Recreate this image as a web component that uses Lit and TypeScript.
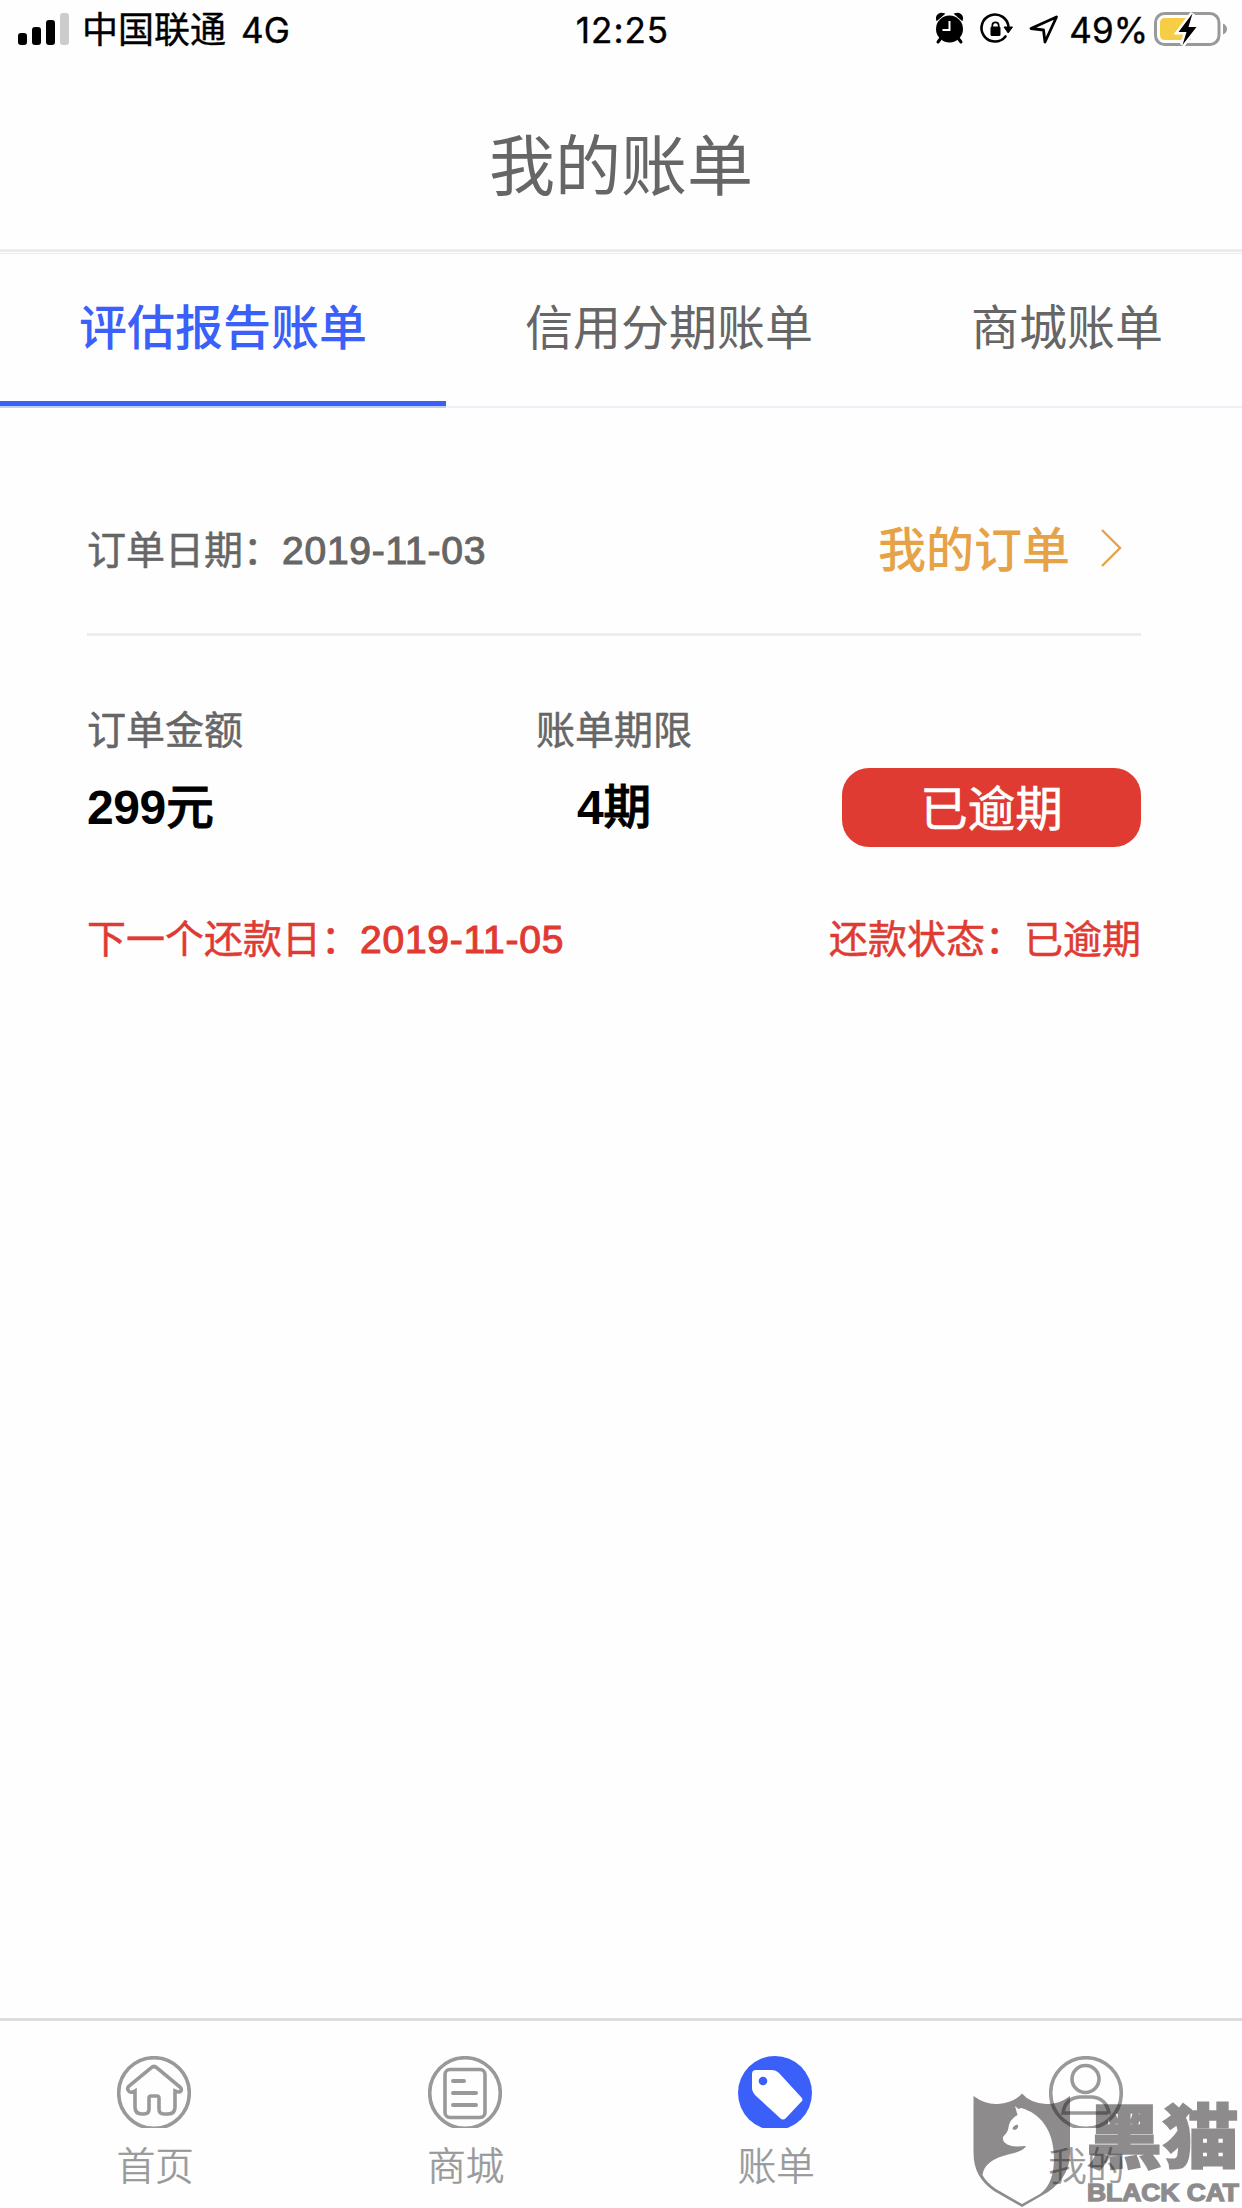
import {css, html, LitElement, svg} from "lit";
import {customElement, property} from "lit/decorators.js";

@customElement("status-bar")
export class StatusBar extends LitElement {
  static override styles = css`
    :host {
      display: flex;
      justify-content: space-between;
      align-items: center;
      height: 60px;
      padding: 0 15px 0 18px;
      box-sizing: border-box;
      color: #000;
      font-family: Inter, "Noto Sans CJK SC", sans-serif;
      font-size: 35px;
      line-height: 59px;
      -webkit-text-stroke: 0.4px;
    }
    .side {
      display: flex;
      flex: 1;
      align-items: center;
    }
    .right {
      justify-content: flex-end;
    }
    .carrier {
      margin-left: 12px;
      font-size: 36px;
      line-height: 60px;
    }
    .network {
      margin-left: 15px;
    }
    .time {
      letter-spacing: 1px;
    }
    .percent {
      margin: 0 5px 0 10px;
    }
    svg {
      display: block;
    }
  `;

  override render() {
    return html`
      <div class="side">
        <svg width="52" height="60">
          <rect x="0" y="33" width="9" height="12" rx="3" />
          <rect x="14" y="27" width="9" height="18" rx="3" />
          <rect x="28" y="20" width="9" height="25" rx="3" />
          <rect x="42" y="13" width="9" height="32" rx="3" fill="#ccc" />
        </svg>
        <span class="carrier">中国联通</span>
        <span class="network">4G</span>
      </div>
      <span class="time">12:25</span>
      <div class="side right">
        <svg width="124" height="60" viewBox="934 0 124 60">
          <circle cx="948.500" cy="29" r="13.500" />
          <path d="M936 20a5 5 0 0 1 7-6zM961 20a5 5 0 0 0-7-6z" stroke="#000" stroke-width="1.500" />
          <path d="M940 38l-3 4M957 38l3 4" stroke="#000" stroke-width="3" stroke-linecap="round" />
          <path d="M948.500 21v9h-7" fill="none" stroke="#fff" stroke-width="2" />
          <path d="M1004.500 36.500a13.500 13.500 0 1 1 3-9" fill="none" stroke="#000" stroke-width="2.600" stroke-linecap="round" />
          <path d="M1003 27h8.500l-4.300 6z" stroke="#000" stroke-linejoin="round" />
          <rect x="989.500" y="26.500" width="10" height="9.500" rx="1.500" />
          <path d="M991.300 28v-2.500a3.200 3.200 0 0 1 6.400 0v2.500" fill="none" stroke="#000" stroke-width="1.700" />
          <path d="M1030 28.500l25.500-11.500-11.500 25-1.500-12z" fill="none" stroke="#000" stroke-width="2.800" stroke-linejoin="round" />
        </svg>
        <span class="percent">49%</span>
        <svg width="74" height="60" viewBox="1153 0 74 60">
          <rect x="1155.500" y="13.500" width="63.500" height="31" rx="9" fill="none" stroke="#999" stroke-width="3" />
          <path d="M1223 23.500q4 2 4 5.500t-4 5.500z" fill="#999" />
          <path d="M1160 23q0-5 5-5h26v22h-26q-5 0-5-5z" fill="#f7cd46" />
          <path d="M1192.500 13.500l-14 18.500h8l-4 13 14-18h-8z" stroke="#fff" stroke-width="5" />
          <path d="M1192.500 13.500l-14 18.500h8l-4 13 14-18h-8z" />
        </svg>
      </div>
    `;
  }
}

@customElement("bill-tabs")
export class BillTabs extends LitElement {
  static override styles = css`
    :host {
      display: flex;
      height: 154px;
      box-sizing: border-box;
      border-bottom: 2px solid #efeff7;
    }
    .tab {
      height: 152px;
      padding: 0 79px;
      box-sizing: border-box;
      font-size: 48px;
      line-height: 150px;
      white-space: nowrap;
    }
    .tab.active {
      height: 154px;
      border-bottom: 2px solid #c0cff2;
      box-shadow: inset 0 -5px #3b60f9;
      color: #3b60f9;
      font-weight: 500;
    }
  `;

  @property({ type: Array }) tabs: string[] = [];
  @property({ type: Number }) active = 0;

  override render() {
    return this.tabs.map(
      (tab, i) => html`<div class="tab ${i === this.active ? "active" : ""}" role="tab">${tab}</div>`
    );
  }
}

@customElement("bill-card")
export class BillCard extends LitElement {
  static override styles = css`
    :host {
      display: block;
      padding: 56px 101px 0 87px;
      font-size: 39px;
    }
    .row {
      display: flex;
      justify-content: space-between;
      align-items: center;
    }
    .head {
      height: 169px;
      border-bottom: 3px solid #eee;
    }
    .text {
      -webkit-text-stroke: 0.5px;
    }
    .head .text {
      padding-bottom: 3px;
    }
    .date {
      letter-spacing: 0.75px;
      -webkit-text-stroke: 1.1px;
    }
    .orders {
      display: flex;
      align-items: center;
      padding-right: 18px;
      color: #e6a246;
      font-size: 48px;
      font-weight: 500;
    }
    .orders span {
      padding-bottom: 5px;
    }
    .orders svg {
      margin: 0 0 2px 29px;
    }
    .amounts {
      display: grid;
      grid-template-columns: 449px 156px 1fr;
      align-items: end;
      padding-top: 63px;
    }
    .label {
      height: 60px;
      line-height: 64px;
    }
    .value {
      height: 72px;
      margin-top: 12px;
      line-height: 73px;
      color: #000;
      font-size: 48px;
      font-weight: bold;
      letter-spacing: -0.4px;
    }
    .term {
      text-align: center;
    }
    .unit {
      font-weight: 500;
      -webkit-text-stroke: 0.8px;
    }
    .badge {
      justify-self: end;
      width: 299px;
      height: 79px;
      margin-bottom: -4px;
      border-radius: 27px;
      background: #df3b32;
      color: #fff;
      font-size: 47.500px;
      line-height: 83px;
      text-align: center;
      -webkit-text-stroke: 0.6px;
    }
    .repay {
      height: 60px;
      padding-top: 63px;
      color: #df3b32;
    }
  `;

  override render() {
    return html`
      <div class="row head">
        <div class="text">订单日期：<span class="date">2019-11-03</span></div>
        <div class="orders">
          <span>我的订单</span>
          <svg width="24" height="42" viewBox="0 0 24 42">
            <path d="M3 3l18 18-18 18" fill="none" stroke="#e6a246" stroke-width="2.400" />
          </svg>
        </div>
      </div>
      <div class="amounts">
        <div>
          <div class="label text">订单金额</div>
          <div class="value">299<span class="unit">元</span></div>
        </div>
        <div class="term">
          <div class="label text">账单期限</div>
          <div class="value">4<span class="unit">期</span></div>
        </div>
        <div class="badge">已逾期</div>
      </div>
      <div class="row repay">
        <div class="text">下一个还款日：<span class="date">2019-11-05</span></div>
        <div class="text">还款状态：已逾期</div>
      </div>
    `;
  }
}

const ring = svg`<circle cx="37" cy="37" r="35.300" />`;

const icons = {
  home: svg`
    ${ring}
    <path d="M11 34q-1-2 1-4L34 12q3-3 6 0L63 31q2 2 1 4t-6 0v16q0 7-7 7h-4q-5 0-5-5V42q0-2-2-2h-6q-2 0-2 2v11q0 5-5 5h-2q-7 0-7-7V35q-5 3-7-1z" />
  `,
  mall: svg`
    ${ring}
    <rect x="17" y="13.500" width="40" height="48" rx="5" />
    <path d="M25 25h11M25 37h23M25 49h23" stroke-width="4" stroke-linecap="round" />
  `,
  bill: svg`
    <circle cx="37" cy="37" r="37" fill="#3b60f9" stroke="none" />
    <path d="M18 14h16q4 0 7 3l22 24q3 3 0 5L48 62q-3 3-6 0L18 40q-4-4-4-8V18q0-4 4-4z" fill="#fff" stroke="none" />
    <circle cx="25" cy="25" r="4.300" fill="#3b60f9" stroke="none" />
  `,
  mine: svg`
    ${ring}
    <circle cx="36.500" cy="23" r="13.500" />
    <path d="M14 57q2-15 17-16h12q14 1 17 16z" />
  `,
};

@customElement("bottom-nav")
export class BottomNav extends LitElement {
  static override styles = css`
    :host {
      display: flex;
      height: 190px;
      box-sizing: border-box;
      border-top: 3px solid #ddd;
      color: #999;
      font-size: 38.500px;
    }
    .item {
      display: flex;
      flex: 1;
      flex-direction: column;
      align-items: center;
      padding-top: 35px;
    }
    .item svg {
      margin-right: 2px;
    }
    .label {
      margin-top: 9px;
      line-height: 60px;
      font-weight: 300;
      -webkit-text-stroke: 0.6px;
    }
  `;

  render() {
    return html`
      ${this.item(icons.home, "首页")}
      ${this.item(icons.mall, "商城")}
      ${this.item(icons.bill, "账单")}
      ${this.item(icons.mine, "我的")}
    `;
  }

  // the icons lose their last two pixels at the bottom
  item(icon: unknown, label: string) {
    return html`
      <div class="item">
        <svg width="74" height="72" viewBox="0 0 74 72" fill="none" stroke="#999" stroke-width="3.600">${icon}</svg>
        <span class="label">${label}</span>
      </div>
    `;
  }
}

@customElement("black-cat-mark")
export class BlackCatMark extends LitElement {
  static override styles = css`
    :host {
      position: absolute;
      right: 0;
      bottom: 0;
      opacity: 0.5;
    }
    svg {
      display: block;
      fill: #1f1b1d;
    }
    .name {
      font: 900 70px/1 "Noto Sans CJK SC", sans-serif;
      stroke: #1f1b1d;
      stroke-width: 1.5px;
    }
    .latin {
      font: bold 23px/1 "Liberation Sans", sans-serif;
      stroke: #1f1b1d;
      stroke-width: 1.3px;
    }
  `;

  override render() {
    return html`
      <svg width="276" height="123" viewBox="966 2085 276 123">
        <path
          fill-rule="evenodd"
          d="M973.500 2096Q986 2105 998 2104Q1014 2103 1022 2093.500Q1030 2103 1046 2104Q1058 2105 1070 2096V2152C1070 2170 1062 2182 1048 2192L1022 2207L994 2191C980 2181 973.500 2170 973.500 2152Z
            M982.500 2175Q986 2182 996 2189L1022 2204L1040 2194Q1054 2184 1054 2158C1054 2130 1040 2113 1021 2108L1018.500 2109L1015 2106L1017.500 2115Q1009 2119 1008 2130Q1007 2133 1003 2137Q1002 2143 1010 2145.500Q1014 2147 1026 2146Q1024 2151 1010 2154Q984 2160 982.500 2175Z"
        />
        <path d="M1012.500 2129q0-3 5-4.500 2 4-3 5.500z" />
        <text class="name" x="1086" y="2162.500" textLength="153" lengthAdjust="spacingAndGlyphs">黑猫</text>
        <text class="latin" x="1087" y="2200.500" textLength="152" lengthAdjust="spacingAndGlyphs">BLACK CAT</text>
      </svg>
    `;
  }
}

@customElement("app-root")
export class AppRoot extends LitElement {
  static override styles = css`
    :host {
      position: relative;
      display: flex;
      flex-direction: column;
      width: 1242px;
      height: 2208px;
      overflow: hidden;
      background: #fefefe;
      color: #666;
      font-family: "Liberation Sans", "Noto Sans CJK SC", sans-serif;
    }
    .title {
      height: 189px;
      border-bottom: 3px solid #ececec;
      font-size: 66px;
      line-height: 214px;
      text-align: center;
    }
    .hairline {
      height: 1px;
      margin-top: 1px;
      background: #ececec;
    }
    .content {
      flex: 1;
    }
  `;

  override render() {
    return html`
      <status-bar></status-bar>
      <div class="title">我的账单</div>
      <div class="hairline"></div>
      <bill-tabs .tabs=${["评估报告账单", "信用分期账单", "商城账单"]}></bill-tabs>
      <bill-card class="content"></bill-card>
      <bottom-nav></bottom-nav>
      <black-cat-mark></black-cat-mark>
    `;
  }
}

declare global {
  interface HTMLElementTagNameMap {
    "app-root": AppRoot;
  }
}
